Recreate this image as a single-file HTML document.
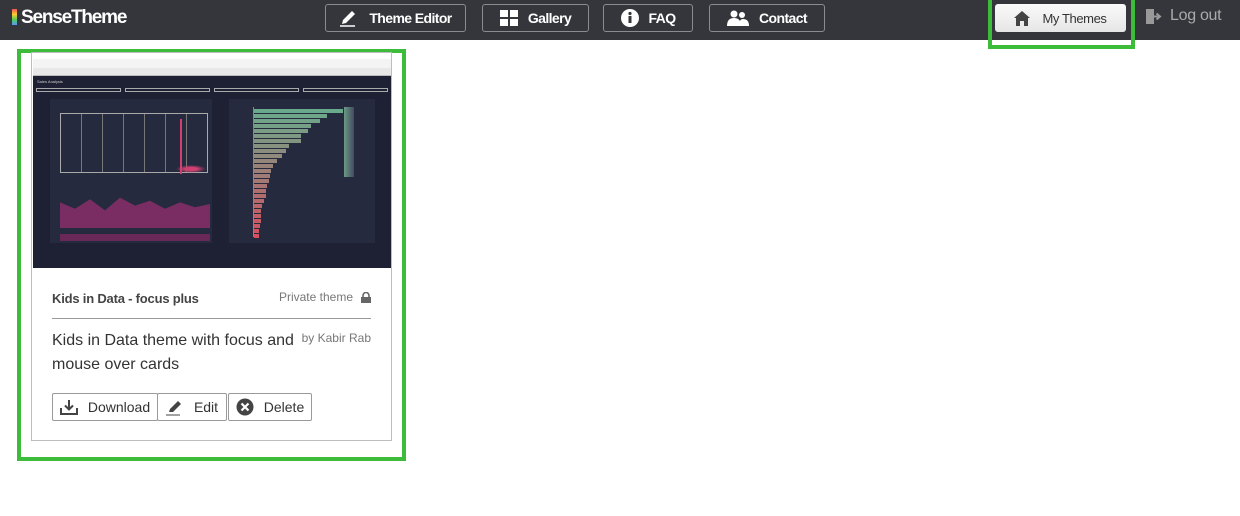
<!DOCTYPE html>
<html><head><meta charset="utf-8"><style>
*{box-sizing:border-box;margin:0;padding:0}
body{width:1240px;height:516px;background:#fff;font-family:"Liberation Sans",sans-serif;position:relative;overflow:hidden}
.hdr{position:absolute;left:0;top:0;width:1240px;height:40px;background:#34363b}
.logo{position:absolute;left:12px;top:7px;color:#fff;font:bold 19px "Liberation Sans",sans-serif;letter-spacing:-1.2px}
.nb{position:absolute;top:4px;height:28px;border:1px solid #8a8c90;border-radius:3px;color:#fff;font:bold 14px "Liberation Sans",sans-serif;letter-spacing:-0.6px;display:flex;align-items:center;justify-content:center;gap:10px}
.mt{position:absolute;left:995px;top:4px;width:131px;height:28px;background:linear-gradient(#fafafa,#e6e6e6);border-radius:3px;color:#333;font:13px "Liberation Sans",sans-serif;letter-spacing:-0.4px;display:flex;align-items:center;justify-content:center;gap:12px}
.gb{position:absolute;border:4px solid #3dbb3a}
.card{position:absolute;left:31px;top:52px;width:361px;height:389px;border:1px solid #bdbdbd;background:#fff}
.th{position:absolute;left:1px;top:6px;width:358px;height:209px;background:#1e2134;overflow:hidden}
.p{position:absolute;background:#252a3f}
.btn{position:absolute;top:340px;height:28px;border:1px solid #9a9a9a;border-radius:2px;display:flex;align-items:center;justify-content:center;gap:10px;font:14px "Liberation Sans",sans-serif;color:#333}
</style></head><body>
<div class="hdr">
 <div class="logo"><span style="display:inline-block;width:5px;height:16px;background:linear-gradient(#e55,#fc3,#5c5,#59f);vertical-align:-2px;margin-right:4px"></span>SenseTheme</div>
 <div class="nb" style="left:325px;width:141px"><svg width="20" height="18" viewBox="0 0 20 18"><path d="M3 15 L4 11 L13 2 L16 5 L7 14 Z" fill="#fff"/><path d="M1 17 H16" stroke="#fff" stroke-width="1.5"/></svg>Theme Editor</div>
 <div class="nb" style="left:482px;width:107px"><svg width="18" height="16"><rect x="0" y="0" width="8" height="7" fill="#fff"/><rect x="10" y="0" width="8" height="7" fill="#fff"/><rect x="0" y="9" width="8" height="7" fill="#fff"/><rect x="10" y="9" width="8" height="7" fill="#fff"/></svg>Gallery</div>
 <div class="nb" style="left:603px;width:90px"><svg width="18" height="18"><circle cx="9" cy="9" r="9" fill="#fff"/><rect x="7.5" y="7" width="3" height="7" fill="#34363b"/><circle cx="9" cy="4.5" r="1.6" fill="#34363b"/></svg>FAQ</div>
 <div class="nb" style="left:709px;width:116px"><svg width="22" height="16"><circle cx="7" cy="4" r="3.5" fill="#fff"/><path d="M0 16 Q0 8 7 8 Q14 8 14 16Z" fill="#fff"/><circle cx="15" cy="5" r="3" fill="#fff"/><path d="M12 16 Q12 9 16 9 Q22 9 22 16Z" fill="#fff"/></svg>Contact</div>
 <div class="mt"><svg width="16" height="15"><path d="M8 0 L16 7 H14 V15 H10 V10 H6 V15 H2 V7 H0 Z" fill="#444"/></svg>My Themes</div>
 <div style="position:absolute;left:1145px;top:7px;color:#aaa;font:16px 'Liberation Sans',sans-serif;letter-spacing:-0.3px;display:flex;gap:8px;align-items:center"><svg width="17" height="17"><path d="M1 1 H9 V16 H1Z" fill="#999"/><path d="M9 8.5 H14 M11.5 5.5 L15 8.5 L11.5 11.5" stroke="#999" stroke-width="2" fill="none"/></svg>Log out</div>
</div>
<div class="gb" style="left:988px;top:-4px;width:147px;height:53px"></div>
<div class="gb" style="left:17px;top:49px;width:389px;height:412px"></div>
<div class="card">
 <div class="th">
  <div style="position:absolute;left:0;top:0;width:358px;height:9px;background:#f4f4f4"></div>
  <div style="position:absolute;left:0;top:9px;width:358px;height:8px;background:#e8e8e8;border-bottom:1px solid #bbb"></div>
  <div style="position:absolute;left:4px;top:20px;font-size:4px;color:#ccc">Sales Analysis</div>
  <div style="position:absolute;left:3px;top:29px;width:85px;height:4px;border:1px solid #aaa"></div>
  <div style="position:absolute;left:92px;top:29px;width:85px;height:4px;border:1px solid #aaa"></div>
  <div style="position:absolute;left:181px;top:29px;width:85px;height:4px;border:1px solid #aaa"></div>
  <div style="position:absolute;left:270px;top:29px;width:85px;height:4px;border:1px solid #aaa"></div>
  <div class="p" style="left:17px;top:40px;width:162px;height:87px">
   <div style="position:absolute;left:10px;top:14px;width:148px;height:60px;border:1px solid #aaa;background:repeating-linear-gradient(90deg,transparent 0 20px,#777 20px 21px)"></div>
   <div style="position:absolute;left:130px;top:20px;width:2px;height:55px;background:#d04070"></div>
   <div style="position:absolute;left:126px;top:66px;width:30px;height:8px;background:radial-gradient(#d04070 30%,transparent 70%)"></div>
  </div>
  <div class="p" style="left:17px;top:127px;width:162px;height:57px">
   <div style="position:absolute;left:10px;top:10px;width:150px;height:32px;background:#7a2d63;clip-path:polygon(0 20%,10% 40%,20% 10%,30% 45%,40% 5%,50% 30%,60% 15%,70% 40%,80% 20%,90% 35%,100% 25%,100% 100%,0 100%)"></div>
   <div style="position:absolute;left:10px;top:48px;width:150px;height:7px;background:#6a2858"></div>
  </div>
  <div class="p" style="left:196px;top:40px;width:146px;height:144px">
   <div style="position:absolute;left:24px;top:8px;width:1px;height:130px;background:#888"></div>
   <div style="position:absolute;left:115px;top:8px;width:10px;height:70px;background:linear-gradient(90deg,#6a9a84,#444a60)"></div>
  </div>
  <div id="bars" style="position:absolute;left:221px;top:50px"></div>
 </div>
 <div style="position:absolute;left:20px;top:238px;font-size:13px;color:#444;font-weight:bold;letter-spacing:-0.2px">Kids in Data - focus plus</div>
 <div style="position:absolute;right:20px;top:237px;font-size:12px;color:#777;display:flex;gap:8px;align-items:center">Private theme <svg width="10" height="11"><path d="M2 5 V3.5 A3 3 0 0 1 8 3.5 V5" stroke="#666" stroke-width="1.6" fill="none"/><rect x="0" y="5" width="10" height="6" fill="#666"/></svg></div>
 <div style="position:absolute;left:20px;top:265px;width:319px;height:1px;background:#999"></div>
 <div style="position:absolute;left:20px;top:276px;font-size:16px;line-height:24px;color:#333;width:250px">Kids in Data theme with focus and mouse over cards</div>
 <div style="position:absolute;right:20px;top:278px;font-size:12px;color:#777">by Kabir Rab</div>
 <div class="btn" style="left:20px;width:106px"><svg width="18" height="16"><path d="M9 1 V10 M5 6.5 L9 10.5 L13 6.5" stroke="#444" stroke-width="2" fill="none"/><path d="M1 9 V15 H17 V9" stroke="#444" stroke-width="2" fill="none"/></svg>Download</div>
 <div class="btn" style="left:125px;width:70px"><svg width="18" height="17"><path d="M3 13 L4 10 L12 2 L15 5 L7 13 Z" fill="#444"/><path d="M0 16 H14" stroke="#444"/></svg>Edit</div>
 <div class="btn" style="left:196px;width:84px"><svg width="18" height="18"><circle cx="9" cy="9" r="8.5" fill="#444"/><path d="M5.5 5.5 L12.5 12.5 M12.5 5.5 L5.5 12.5" stroke="#fff" stroke-width="2.2"/></svg>Delete</div>
</div>
<script>
var w=[89,73,66,57,54,47,47,35,32,28,23,19,17,16,15,13,12,12,10,8,7,7,7,6,5,5],h='';
for(var i=0;i<w.length;i++){var t=i/(w.length-1);var r=Math.round(106+t*(210-106)),g=Math.round(170-t*(170-80)),b=Math.round(140-t*(140-95));
h+='<div style="position:absolute;left:0;top:'+(i*5)+'px;width:'+w[i]+'px;height:4px;background:rgb('+r+','+g+','+b+')"></div>';}
document.getElementById('bars').innerHTML=h;
</script>
</body></html>
